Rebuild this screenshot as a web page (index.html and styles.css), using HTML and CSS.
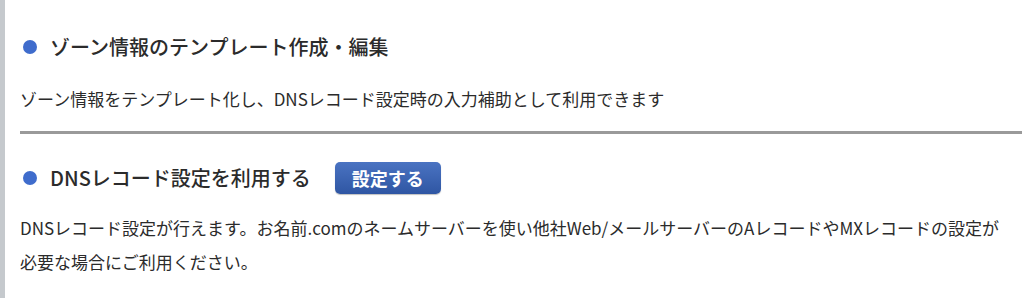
FILE: index.html
```html
<!DOCTYPE html>
<html lang="ja">
<head>
<meta charset="utf-8">
<link rel="stylesheet" href="styles.css">
</head>
<body>
<div class="page">
  <section class="block first">
    <h2 class="title"><span class="dot"></span>ゾーン情報のテンプレート作成・編集</h2>
    <p class="desc">ゾーン情報をテンプレート化し、DNSレコード設定時の入力補助として利用できます</p>
  </section>
  <hr class="divider">
  <section class="block second">
    <h2 class="title"><span class="dot"></span>DNSレコード設定を利用する<a class="btn" href="#">設定する</a></h2>
    <p class="desc">DNSレコード設定が行えます。お名前.comのネームサーバーを使い他社Web/メールサーバーのAレコードやMXレコードの設定が必要な場合にご利用ください。</p>
  </section>
</div>
</body>
</html>
```

FILE: styles.css
```css
html, body {
  margin: 0;
  padding: 0;
  background: #fff;
}
body {
  font-family: "Noto Sans CJK JP", "Noto Sans", sans-serif;
  color: #2b2b2b;
  height: 298px;
  overflow: hidden;
}
.page {
  border-left: 5px solid #c5c9cd;
  padding: 0 2px 0 15px;
  height: 298px;
  box-sizing: border-box;
}
.block.first {
  padding-top: 30px;
}
.block.second {
  padding-top: 27px;
}
.second .desc {
  margin-top: 16px;
}
.title {
  display: flex;
  align-items: center;
  margin: 0;
  font-size: 20px;
  font-weight: 500;
  line-height: 34px;
  color: #2b2b2b;
}
.dot {
  width: 14px;
  height: 14px;
  border-radius: 50%;
  background: #3f6ccc;
  margin-left: 3px;
  margin-right: 13px;
  flex: none;
}
.btn {
  margin-left: 24px;
  display: inline-block;
  padding: 0 17px;
  height: 32px;
  line-height: 32px;
  font-size: 18px;
  font-weight: 700;
  color: #fff;
  text-decoration: none;
  border-radius: 5px;
  background: linear-gradient(#4a73c2, #2f56a3);
  box-shadow: 0 1px 1px rgba(0,0,0,0.25);
}
.desc {
  margin: 18px 10px 0 0;
  font-size: 17px;
  line-height: 34px;
  color: #2b2b2b;
}
.divider {
  border: 0;
  height: 3px;
  background: #9a9a9a;
  margin: 15px 0 0;
}
```
